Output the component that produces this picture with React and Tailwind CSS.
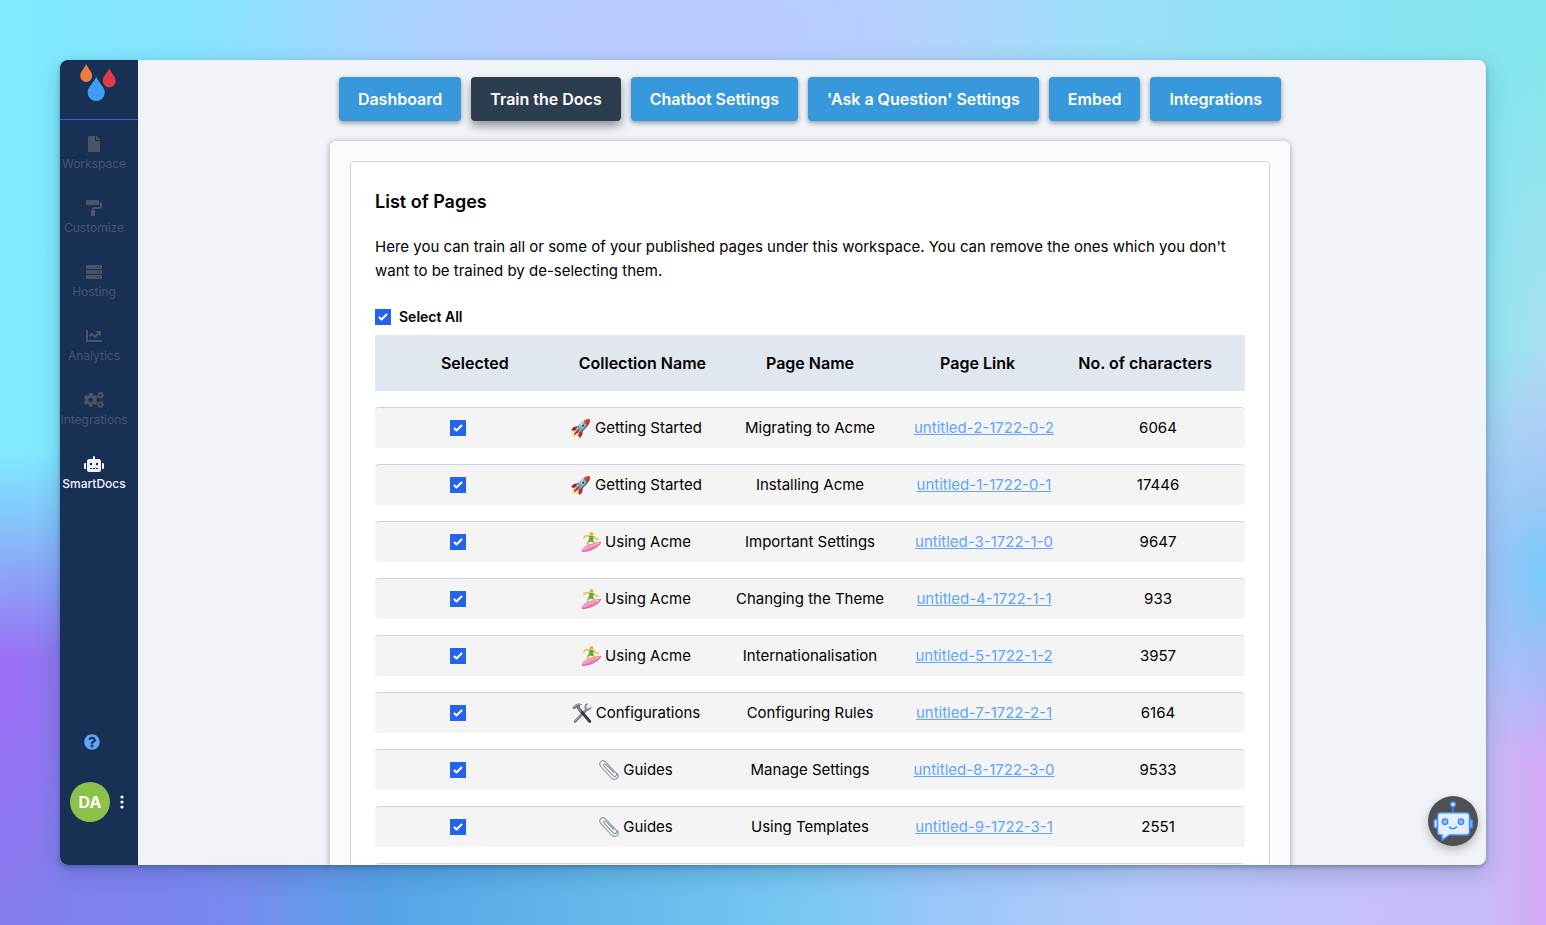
import React, { useState } from 'react';
import { FaChartLine, FaCogs, FaFile, FaPaintRoller, FaQuestionCircle, FaRobot, FaServer } from 'react-icons/fa';

const NAV_ITEMS = [
    { label: 'Workspace', icon: <FaFile className="h-4 w-4" /> },
    { label: 'Customize', icon: <FaPaintRoller className="h-4 w-4" /> },
    { label: 'Hosting', icon: <FaServer className="h-4 w-4" /> },
    { label: 'Analytics', icon: <FaChartLine className="h-4 w-4" /> },
    { label: 'Integrations', icon: <FaCogs className="h-4 w-5" /> },
    { label: 'SmartDocs', icon: <FaRobot className="h-4 w-5" />, active: true },
];

const TABS = ['Dashboard', 'Train the Docs', 'Chatbot Settings', "'Ask a Question' Settings", 'Embed', 'Integrations'];

const COLUMNS = ['Selected', 'Collection Name', 'Page Name', 'Page Link', 'No. of characters'];

const PAGES = [
    { icon: 'rocket', collection: 'Getting Started', name: 'Migrating to Acme', link: 'untitled-2-1722-0-2', chars: 6064 },
    { icon: 'rocket', collection: 'Getting Started', name: 'Installing Acme', link: 'untitled-1-1722-0-1', chars: 17446 },
    { icon: 'surfer', collection: 'Using Acme', name: 'Important Settings', link: 'untitled-3-1722-1-0', chars: 9647 },
    { icon: 'surfer', collection: 'Using Acme', name: 'Changing the Theme', link: 'untitled-4-1722-1-1', chars: 933 },
    { icon: 'surfer', collection: 'Using Acme', name: 'Internationalisation', link: 'untitled-5-1722-1-2', chars: 3957 },
    { icon: 'tools', collection: 'Configurations', name: 'Configuring Rules', link: 'untitled-7-1722-2-1', chars: 6164 },
    { icon: 'clip', collection: 'Guides', name: 'Manage Settings', link: 'untitled-8-1722-3-0', chars: 9533 },
    { icon: 'clip', collection: 'Guides', name: 'Using Templates', link: 'untitled-9-1722-3-1', chars: 2551 },
];

export default function App() {
    return (
        <div className="relative h-screen overflow-hidden p-[60px] font-['Inter','Liberation_Sans',sans-serif] text-black bg-[radial-gradient(ellipse_420px_110px_at_42%_3%,#bccbfe_0%,transparent_100%),radial-gradient(ellipse_90px_300px_at_100%_38%,#a8e0f4_0%,transparent_100%),linear-gradient(to_right,#80ebff_0%,#86e4fd_12%,#aad4fd_34%,#b4d2fc_55%,#9bdff8_72%,#88e4f3_88%,#84e6ec_100%)]">
            {/* Lower half of the backdrop */}
            <div className="absolute inset-0 bg-[radial-gradient(ellipse_110px_260px_at_0%_72%,#9c6df6_0%,transparent_100%),radial-gradient(ellipse_120px_190px_at_100%_62%,#78cdf9_0%,transparent_100%),linear-gradient(to_right,#857cf0_0%,#788aee_15%,#57a3e8_25%,#63b7ea_38%,#79c8f3_52%,#9cc7f9_62%,#b5cafb_74%,#c5c0fa_88%,#c8bcf9_96%,#d4a8f6_100%)] mask-[linear-gradient(176deg,transparent_44%,black_64%)]"></div>

            <div className="relative flex h-full overflow-hidden rounded-lg bg-[#f0f4f9] shadow-[0_2px_4px_rgba(20,50,90,0.35),0_8px_24px_rgba(20,50,90,0.22)]">
                <Sidebar />
                <main className="flex-1 overflow-hidden pt-[17px] pr-1">
                    <nav className="flex justify-center gap-[10px]">
                        {TABS.map((tab) => (
                            <TabButton key={tab} label={tab} active={tab === 'Train the Docs'} />
                        ))}
                    </nav>
                    <div className="mx-auto mt-5 max-w-[960px] rounded-md bg-[#fbfcfe] p-5 shadow-[0_1px_6px_rgba(0,0,0,0.35)]">
                        <PageList />
                    </div>
                </main>
                <button aria-label="Open chatbot" className="absolute right-2 bottom-[19px] h-[50px] w-[50px] rounded-full bg-[#505050] shadow-[0_4px_10px_rgba(0,0,0,0.25)]">
                    <ChatbotIcon />
                </button>
            </div>
        </div>
    );
}

function Sidebar() {
    return (
        <aside className="flex w-[78px] shrink-0 flex-col bg-[#193055]">
            <a href="#home" aria-label="Home" className="block h-[60px] border-b border-[#2563eb] pt-[3px] pl-[18px]">
                <Logo />
            </a>
            <ul className="w-[68px]">
                {NAV_ITEMS.map((item) => (
                    <li key={item.label}>
                        <a
                            href={`#${item.label.toLowerCase()}`}
                            className={`flex h-16 flex-col items-center pt-4 text-xs ${item.active ? 'font-medium text-[#f1f5f9]' : 'text-[#4a5568]'}`}
                        >
                            {item.icon}
                            <span className="mt-1">{item.label}</span>
                        </a>
                    </li>
                ))}
            </ul>
            <button aria-label="Help" className="mt-auto ml-6 w-4 text-[#60a5fa]">
                <FaQuestionCircle className="h-4 w-4" />
            </button>
            <div className="mt-[23px] mb-[35px] ml-px flex h-[57px] items-center rounded-lg pl-[9px] shadow-[0_1px_2px_rgba(0,0,0,0.12)]">
                <span className="flex h-10 w-10 items-center justify-center rounded-full bg-[#8bc34a] font-bold text-white">DA</span>
                <button aria-label="Account menu" className="ml-[10px]">
                    <svg viewBox="0 0 4 14" className="h-[14px] w-1" fill="#fff">
                        <circle cx="2" cy="2" r="1.6" />
                        <circle cx="2" cy="7" r="1.6" />
                        <circle cx="2" cy="12" r="1.6" />
                    </svg>
                </button>
            </div>
        </aside>
    );
}

function TabButton({ label, active }) {
    return (
        <button
            className={`h-11 rounded px-[19px] font-semibold text-white ${
                active ? 'bg-[#2d3d50] shadow-[0_5px_10px_rgba(0,0,0,0.4)]' : 'bg-[#3898dc] shadow-[0_2px_5px_rgba(0,0,0,0.4)]'
            }`}
        >
            {label}
        </button>
    );
}

function PageList() {
    const [selected, setSelected] = useState(PAGES.map(() => true));
    const allSelected = selected.every(Boolean);

    const toggle = (index) => setSelected(selected.map((value, i) => (i === index ? !value : value)));

    return (
        <section className="rounded border border-[#cbd5e1] bg-white p-6">
            <h2 className="text-lg leading-8 font-semibold">List of Pages</h2>
            <p className="mt-[17px] text-[15px] leading-6">
                Here you can train all or some of your published pages under this workspace. You can remove the ones which you don't want to be
                trained by de-selecting them.
            </p>
            <label className="mt-[22px] flex h-6 w-fit items-center gap-2 text-sm font-semibold">
                <Checkbox checked={allSelected} onChange={() => setSelected(PAGES.map(() => !allSelected))} />
                Select All
            </label>

            <table className="mt-[6px] block w-full text-center">
                <thead className="block">
                    <tr className="grid h-14 grid-cols-5 items-center bg-[#e1e7ef] px-4">
                        {COLUMNS.map((column) => (
                            <th key={column} className="font-semibold whitespace-nowrap">{column}</th>
                        ))}
                    </tr>
                </thead>
                <tbody className="block text-[15px] leading-[26px]">
                    {PAGES.map((page, index) => (
                        <tr key={page.link} className="mt-4 grid h-[41px] grid-cols-5 items-center rounded border-t border-[#cbd5e1] bg-[#f4f4f4]">
                            <td className="flex justify-center pr-2">
                                <Checkbox checked={selected[index]} onChange={() => toggle(index)} label={`Select ${page.name}`} />
                            </td>
                            <td className="flex items-center justify-center gap-1">
                                <CollectionIcon name={page.icon} />
                                {page.collection}
                            </td>
                            <td>{page.name}</td>
                            <td>
                                <a href={`#${page.link}`} className="text-[#60a5fa] underline">{page.link}</a>
                            </td>
                            <td>{page.chars}</td>
                        </tr>
                    ))}
                    <tr aria-hidden="true" className="mt-4 block h-[41px] rounded border-t border-[#cbd5e1] bg-[#f4f4f4]"></tr>
                </tbody>
            </table>
        </section>
    );
}

function Checkbox({ checked, onChange, label }) {
    return (
        <span className="grid h-4 w-4">
            <input
                type="checkbox"
                checked={checked}
                onChange={onChange}
                aria-label={label}
                className="col-start-1 row-start-1 h-4 w-4 appearance-none border border-gray-500 bg-white checked:border-[#2563eb] checked:bg-[#2563eb]"
            />
            {checked && (
                <svg viewBox="0 0 16 16" className="pointer-events-none col-start-1 row-start-1 h-4 w-4" fill="#fff">
                    <path d="M12.207 4.793a1 1 0 010 1.414l-5 5a1 1 0 01-1.414 0l-2-2a1 1 0 011.414-1.414L6.5 9.086l4.293-4.293a1 1 0 011.414 0z" />
                </svg>
            )}
        </span>
    );
}

function CollectionIcon({ name }) {
    if (name === 'surfer') return <SurferIcon />;
    if (name === 'tools') return <ToolsIcon />;
    if (name === 'clip') return <PaperclipIcon />;
    return <span className="text-[17px]">🚀</span>;
}

function SurferIcon() {
    return (
        <svg viewBox="0 0 20 20" className="h-5 w-5" role="img" aria-label="Surfer" fill="none">
            <path d="M.6 19.2C1.5 16 5 13.5 9.5 12.1c4-1.3 8-2.6 10-2.2.4 1.8-2.3 4.500-6.500 6.600C8.500 18.800 3.500 20 .6 19.200z" fill="#f27fc3" />
            <path d="M2.500 18.300c2.500-2.500 8-5 15.500-7.200" stroke="#fbd3ea" strokeWidth="1" />
            <path d="M.6 19.200c3 .8 8-.5 12.400-2.700 4.200-2.100 6.900-4.800 6.500-6.600" stroke="#d9459c" strokeWidth=".8" />
            <path d="M8.500 4.300L5 3.600 2.800 5.800M12.800 4.600l2 2.200 2.600.2" stroke="#f3b52f" strokeWidth="1.400" strokeLinecap="round" strokeLinejoin="round" />
            <path d="M8.500 9L6.300 10.800l1.200 3.200M11.300 9l2.200 1.800-.7 2.400" stroke="#f3b52f" strokeWidth="1.500" strokeLinecap="round" strokeLinejoin="round" />
            <path d="M8 3.700l4.800.5-.5 3.300.5 2-2 .8-1.300-1-1.800 1.400-.9-1.300L8.300 7z" fill="#56ae35" />
            <circle cx="10.800" cy="2.200" r="1.800" fill="#f6bd35" />
            <path d="M8.800 2.300C8.800.8 10.500 0 12 .8l-1.800.9-.6 2z" fill="#d99018" />
        </svg>
    );
}

function ToolsIcon() {
    return (
        <svg viewBox="0 0 20 20" className="h-5 w-5" role="img" aria-label="Tools" fill="none">
            <path d="M14.500 6.500L3 18.500" stroke="#737b84" strokeWidth="2.600" strokeLinecap="round" />
            <path d="M14.300 6.200L3.500 17.500" stroke="#b5bcc4" strokeWidth=".8" strokeLinecap="round" />
            <path d="M19.300 3.200l-2.600 2.300-2-.5-.5-2L16.700.7c-2.500-.7-4.700 1-4.400 3.500.2 2.200 2 3.700 4.200 3.300 2-.4 3.300-2.300 2.800-4.300z" fill="#8a939c" />
            <path d="M7.500 6.500l10.300 12" stroke="#35393d" strokeWidth="2.800" strokeLinecap="round" />
            <path d="M5.500 4.500l3.500 4" stroke="#838b93" strokeWidth="2" />
            <path d="M1 5.800L.4 4.500 3.800 1.200C5.500.3 8 .4 10.300 1.400L7.800 2.300l.6 2L5.800 6.200 4.300 4.600 2.600 6.200z" fill="#6f7881" />
            <path d="M1.500 4.500l2.700-2.600C5.500 1.200 7 1.200 8.200 1.400" stroke="#bcc3ca" strokeWidth=".8" />
        </svg>
    );
}

function PaperclipIcon() {
    return (
        <svg viewBox="0 0 20 20" className="h-5 w-5" role="img" aria-label="Paperclip" fill="none" stroke="#8e9aab" strokeWidth="1.100" strokeLinecap="round" strokeLinejoin="round">
            <path d="M14.800 12.500L6.800 4.300C5.600 3.100 3.800 4.800 5 6.200l9 9.400c2.300 2.300 5-.3 3-2.700L6.500 1.800C3.200-1.200-1 2.800 1.600 6.400L12.400 18c1.800 1.700 4.200 1.700 5.800.1 1.300-1.300 1.300-3.200.2-4.600" />
        </svg>
    );
}

function Logo() {
    return (
        <svg viewBox="0 0 40 40" className="h-10 w-10">
            <path d="M8.200 1C9.800 5.300 14.200 8.600 14.200 13a6 6 0 01-12 0C2.200 8.600 6.600 5.300 8.200 1z" fill="#f07d3c" />
            <path d="M31.200 5.300c1.600 4.500 6.500 8 6.500 12.600a6.500 6.500 0 01-13 0c0-4.600 4.900-8.100 6.500-12.600z" fill="#df3b4b" />
            <path d="M18.200 13.600c2.200 6.200 8.600 10.400 8.600 15.700a8.600 8.600 0 01-17.200 0c0-5.300 6.400-9.500 8.600-15.700z" fill="#3f9cf8" />
        </svg>
    );
}

function ChatbotIcon() {
    return (
        <svg viewBox="0 0 50 50" className="h-[50px] w-[50px]" fill="none" stroke="#3b8ef5" strokeWidth="1.500">
            <path d="M25 10.500V17" />
            <circle cx="25" cy="8.300" r="2.400" fill="#e3edfd" />
            <path d="M9.500 23.500H8a2 2 0 00-2 2v4.500a2 2 0 002 2h1.500z" fill="#e3edfd" />
            <path d="M41 23.500h1.500a2 2 0 012 2v4.500a2 2 0 01-2 2H41z" fill="#7db6fa" />
            <path d="M12.500 16.700h26a3 3 0 013 3v16.200a3 3 0 01-3 3H21.500L14 44.300v-5.400h-1.500a3 3 0 01-3-3V19.700a3 3 0 013-3z" fill="#e3edfd" strokeLinejoin="round" />
            <circle cx="17" cy="25.700" r="2.700" fill="#a3b8e0" />
            <circle cx="33" cy="25.700" r="2.700" fill="#a3b8e0" />
            <path d="M21.500 31c1.500 2.200 5.500 2.200 7 0" strokeLinecap="round" />
        </svg>
    );
}
